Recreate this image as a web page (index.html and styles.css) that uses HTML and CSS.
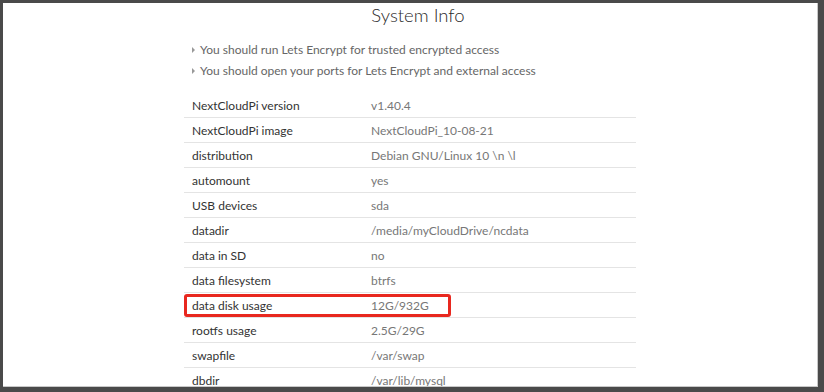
FILE: index.html
```html
<!DOCTYPE html>
<html lang="en">
<head>
    <meta charset="UTF-8">
    <meta name="viewport" content="width=device-width, initial-scale=1.0">
    <title>System Info</title>
    <link rel="stylesheet" href="styles.css">
</head>
<body>

    <div class="window">
        <h1>System Info</h1>

        <div class="container">
            <ul class="hints">
                <li>You should run Lets Encrypt for trusted encrypted access</li>
                <li>You should open your ports for Lets Encrypt and external access</li>
            </ul>

            <table class="info">
                <tbody>
                    <tr><td>NextCloudPi version</td><td>v1.40.4</td></tr>
                    <tr><td>NextCloudPi image</td><td>NextCloudPi_10-08-21</td></tr>
                    <tr><td>distribution</td><td>Debian GNU/Linux 10 \n \l</td></tr>
                    <tr><td>automount</td><td>yes</td></tr>
                    <tr><td>USB devices</td><td>sda</td></tr>
                    <tr><td>datadir</td><td>/media/myCloudDrive/ncdata</td></tr>
                    <tr><td>data in SD</td><td>no</td></tr>
                    <tr><td>data filesystem</td><td>btrfs</td></tr>
                    <tr class="marked"><td>data disk usage</td><td>12G/932G</td></tr>
                    <tr><td>rootfs usage</td><td>2.5G/29G</td></tr>
                    <tr><td>swapfile</td><td>/var/swap</td></tr>
                    <tr><td>dbdir</td><td>/var/lib/mysql</td></tr>
                </tbody>
            </table>
        </div>
    </div>

</body>
</html>
```

FILE: styles.css
```css
html, body { height: 100%; }
body { font-family: 'Lato', sans-serif; background-color: #4a4a4a; margin: 0; padding: 3px 6px 5px 3px; box-sizing: border-box; overflow: hidden; }
.window { background-color: #ffffff; height: 100%; border-right: 1px solid #c8c8c8; border-bottom: 1px solid #c8c8c8; box-sizing: border-box; overflow: hidden; }
h1 { margin: 0; padding-left: 16px; font-size: 18.5px; font-weight: 300; line-height: 25px; text-align: center; color: #2a2a2a; }
.container { width: 452px; margin: 0 auto; }
.hints { list-style: none; margin: 11px 0 0; padding: 0 0 0 16px; }
.hints li { position: relative; font-size: 12px; line-height: 21px; color: #666; }
.hints li::before { content: ''; position: absolute; left: -8px; top: 8px; border-left: 3px solid #999; border-top: 3px solid transparent; border-bottom: 3px solid transparent; }
.info { width: 100%; border-collapse: collapse; margin-top: 12px; font-size: 12px; }
.info td { padding: 0 8px; height: 24px; border-bottom: 1px solid #e4e4e4; color: #333; }
.info td:first-child { width: 163px; }
.info td + td { color: #777; }
.marked { position: relative; }
.marked td:first-child::after { content: ''; position: absolute; left: 0; top: 1px; width: 261px; height: 17px; border: 3px solid #e8281f; border-radius: 3px; }
```
